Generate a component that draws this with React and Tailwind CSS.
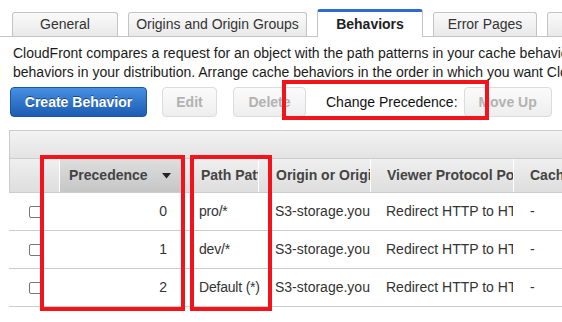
import React from "react"

const tabs = [
  { label: "General", w: "w-[106px]" },
  { label: "Origins and Origin Groups", w: "w-[179px]" },
  { label: "Behaviors", w: "w-[106px]", active: true },
  { label: "Error Pages", w: "w-[104px]" },
  { label: "Restrictions", w: "w-[110px]" },
]

const rows = [
  { prec: 0, path: "pro/*" },
  { prec: 1, path: "dev/*" },
  { prec: 2, path: "Default (*)" },
]

const Btn = ({ children, className }) => (
  <div
    className={`h-[30px] flex items-center justify-center rounded-[4px] border border-[#dcdcdc] bg-gradient-to-b from-[#fbfbfb] to-[#eeeeee] text-[#b2b2b2] font-bold text-[14px] ${className}`}
  >
    {children}
  </div>
)

export default function App() {
  return (
    <div className="relative w-[562px] h-[322px] overflow-hidden bg-white font-['Liberation_Sans',Arial,sans-serif] text-[14px] text-[#222]">
      {/* tabs */}
      <div className="flex items-end h-[37px] border-b border-[#c4c4c4] pl-[12px] gap-[10px]">
        {tabs.map((t) =>
          t.active ? (
            <div
              key={t.label}
              className={`${t.w} shrink-0 h-[28px] -mb-px flex items-center justify-center bg-white border border-[#c4c4c4] border-b-0 border-t-[3px] border-t-[#2d6ccc] rounded-t-[3px] font-bold text-[#222]`}
            >
              {t.label}
            </div>
          ) : (
            <div
              key={t.label}
              className={`${t.w} shrink-0 h-[24px] flex items-center justify-center bg-gradient-to-b from-[#fafafa] to-[#e9e9e9] border border-[#c4c4c4] border-b-0 rounded-t-[3px] text-[#333]`}
            >
              {t.label}
            </div>
          )
        )}
      </div>

      {/* description */}
      <div className="mt-[7px] px-[13px] leading-[19px] text-[#1a1a1a]">
        <div className="whitespace-nowrap">
          CloudFront compares a request for an object with the path patterns in your cache behaviors based on the order of the cache
        </div>
        <div className="whitespace-nowrap">
          behaviors in your distribution. Arrange cache behaviors in the order in which you want CloudFront to evaluate them.
        </div>
      </div>

      {/* buttons */}
      <div className="mt-[5px] flex items-center h-[30px] pl-[10px]">
        <div className="w-[137px] h-[30px] flex items-center justify-center rounded-[4px] border border-[#1a55a6] bg-gradient-to-b from-[#4690e4] to-[#1c5cb2] text-white font-bold text-[14px] [text-shadow:0_-1px_0_rgba(0,0,0,0.45)]">
          Create Behavior
        </div>
        <Btn className="ml-[15px] w-[55px]">Edit</Btn>
        <Btn className="ml-[16px] w-[73px]">Delete</Btn>
        <span className="ml-[20px] text-[#111]">Change Precedence:</span>
        <Btn className="ml-[6px] w-[88px]">Move Up</Btn>
      </div>

      {/* table */}
      <div className="mt-[13px] ml-[9px] w-[620px]">
        <div className="h-[29px] border border-[#cccccc] border-r-0 bg-gradient-to-b from-[#f3f3f3] to-[#e3e3e3]" />
        <div className="flex h-[34px] border-l border-b border-[#cccccc] font-bold text-[#444] bg-gradient-to-b from-[#efefef] to-[#dedede]">
          <div className="w-[50px] shrink-0 border-r border-white" />
          <div className="w-[124px] shrink-0 flex items-center pl-[9px] bg-gradient-to-b from-[#dedede] to-[#c6c6c6] border-r border-white">
            <span>Precedence</span>
            <svg width="9" height="6" viewBox="0 0 9 6" className="ml-[14px]">
              <path d="M0 0h9L4.5 5.5z" fill="#222" />
            </svg>
          </div>
          <div className="w-[75px] shrink-0 flex items-center pl-[17px] overflow-hidden whitespace-nowrap border-r border-white">
            Path Pattern
          </div>
          <div className="w-[112px] shrink-0 flex items-center pl-[17px] overflow-hidden whitespace-nowrap border-r border-white">
            Origin or Origin Group
          </div>
          <div className="w-[143px] shrink-0 flex items-center pl-[16px] overflow-hidden whitespace-nowrap border-r border-white">
            Viewer Protocol Policy
          </div>
          <div className="w-[116px] shrink-0 flex items-center pl-[16px] overflow-hidden whitespace-nowrap">
            Cache Policy
          </div>
        </div>
        {rows.map((r) => (
          <div key={r.prec} className="flex h-[38px] border-b border-[#cccccc] text-[#333]">
            <div className="w-[50px] shrink-0 flex items-center pl-[20px]">
              <div className="w-[13px] h-[12px] border border-[#777] rounded-[2px] bg-white" />
            </div>
            <div className="w-[124px] shrink-0 flex items-center justify-end pr-[16px]">{r.prec}</div>
            <div className="w-[75px] shrink-0 flex items-center pl-[16px] whitespace-nowrap tracking-[-0.2px]">{r.path}</div>
            <div className="w-[112px] shrink-0 flex items-center pl-[17px] overflow-hidden whitespace-nowrap">
              S3-storage.yourdomain.com
            </div>
            <div className="w-[143px] shrink-0 flex items-center pl-[16px] overflow-hidden whitespace-nowrap">
              Redirect HTTP to HTTPS
            </div>
            <div className="w-[116px] shrink-0 flex items-center pl-[17px]">-</div>
          </div>
        ))}
      </div>

      {/* annotations */}
      <div className="absolute left-[282px] top-[80px] w-[207px] h-[40px] border-4 border-[#f2131b]" />
      <div className="absolute left-[40px] top-[155px] w-[145px] h-[156px] border-4 border-[#f2131b]" />
      <div className="absolute left-[190px] top-[155px] w-[82px] h-[156px] border-4 border-[#f2131b]" />
    </div>
  )
}
